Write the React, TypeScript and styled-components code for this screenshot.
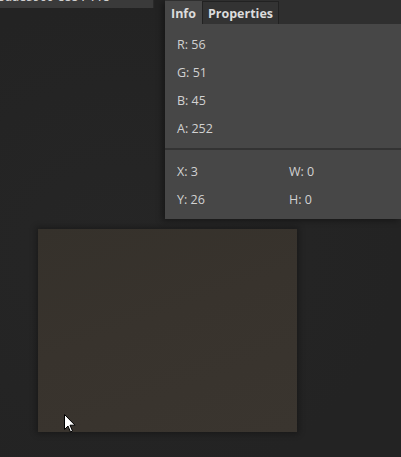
import styled, { createGlobalStyle } from "styled-components";

const colors = {
  workspace: "#232323",
  docTab: "#3a3a3a",
  panel: "#474747",
  panelBar: "#2f2f2f",
  tabIdle: "#333333",
  tabBorder: "#222222",
  divider: "#333333",
  text: "#d2d2d2",
  tabText: "#dcdcdc",
  canvas: "#38332d",
};

const GlobalStyle = createGlobalStyle`
  html, body {
    margin: 0;
    padding: 0;
    background: ${colors.workspace};
  }

  body {
    font-family: "Open Sans", "Noto Sans", sans-serif;
  }
`;

interface Reading {
  label: string;
  value: number;
}

const pixel: Reading[] = [
  { label: "R", value: 56 },
  { label: "G", value: 51 },
  { label: "B", value: 45 },
  { label: "A", value: 252 },
];

const selection: Reading[] = [
  { label: "X", value: 3 },
  { label: "W", value: 0 },
  { label: "Y", value: 26 },
  { label: "H", value: 0 },
];

const Cursor = () => (
  <CursorSvg width="13" height="20" viewBox="0 0 13 20">
    <path
      d="M0.5 0.5 L0.5 15.5 L4 12 L6.5 18 L8.5 17 L6 11.2 L11 11.2 Z"
      fill="#ffffff"
      stroke="#000000"
      strokeWidth="1"
      strokeLinejoin="miter"
    />
  </CursorSvg>
);

const App = () => {
  return (
    <>
      <GlobalStyle />
      <Workspace>
        <TopRow>
          <DocColumn>
            <DocTab>
              <DocTitle>3dae5900-e884-11e</DocTitle>
              <DocClose>× ×</DocClose>
            </DocTab>
          </DocColumn>

          <Panel>
            <TabBar>
              <Tab active>Info</Tab>
              <Tab active={false}>Properties</Tab>
            </TabBar>

            <PanelBody>
              <Section>
                {pixel.map((r) => (
                  <Row key={r.label}>
                    {r.label}: {r.value}
                  </Row>
                ))}
              </Section>
              <Divider />
              <SectionGrid>
                {selection.map((r) => (
                  <Row key={r.label}>
                    {r.label}: {r.value}
                  </Row>
                ))}
              </SectionGrid>
            </PanelBody>
          </Panel>
        </TopRow>

        <Canvas>
          <Cursor />
        </Canvas>
      </Workspace>
    </>
  );
};

const Workspace = styled.div`
  width: 401px;
  height: 457px;
  overflow: hidden;

  background: radial-gradient(
    ellipse at 30% 55%,
    #262626 0%,
    ${colors.workspace} 70%
  );

  display: flex;
  flex-direction: column;
`;

const TopRow = styled.div`
  display: flex;
  align-items: flex-start;
`;

const DocColumn = styled.div`
  width: 165px;
  flex-shrink: 0;
`;

const DocTab = styled.div`
  width: 154px;
  height: 8px;
  overflow: hidden;

  background-color: ${colors.docTab};
  border-right: 1px solid #2a2a2a;

  display: flex;
  align-items: flex-start;
  justify-content: space-between;
  padding-right: 18px;
  box-sizing: border-box;
`;

const DocTitle = styled.span`
  margin-top: -10px;
  margin-left: -2px;

  font-size: 12px;
  line-height: 14px;
  font-weight: 600;
  color: #cfcfcf;
  white-space: nowrap;
`;

const DocClose = styled.span`
  margin-top: -10px;

  font-size: 12px;
  line-height: 14px;
  color: #9a9a9a;
`;

const Panel = styled.div`
  width: 236px;
  flex-shrink: 0;

  display: flex;
  flex-direction: column;

  box-shadow: -3px 2px 6px rgba(0, 0, 0, 0.35);
`;

const TabBar = styled.div`
  height: 24px;
  padding-top: 1px;
  box-sizing: border-box;

  background-color: ${colors.panelBar};

  display: flex;
  align-items: stretch;
`;

const Tab = styled.div<{ active: boolean }>`
  padding: 0 5px;

  display: flex;
  align-items: center;

  font-size: 12.5px;
  font-weight: 700;
  color: ${colors.tabText};

  background-color: ${({ active }) => (active ? colors.panel : colors.tabIdle)};
  border: 1px solid ${({ active }) => (active ? colors.panel : colors.tabBorder)};
  border-bottom: none;
`;

const PanelBody = styled.div`
  background-color: ${colors.panel};
  padding: 6px 0 6px;
`;

const Section = styled.div`
  display: flex;
  flex-direction: column;
  padding-bottom: 6px;
`;

const SectionGrid = styled.div`
  display: grid;
  grid-template-columns: 112px 1fr;
  padding-top: 7px;
`;

const Row = styled.div`
  height: 28px;
  padding-left: 12px;

  display: flex;
  align-items: center;

  font-size: 12.5px;
  color: ${colors.text};
`;

const Divider = styled.div`
  height: 2px;
  background-color: ${colors.divider};
`;

const Canvas = styled.div`
  position: relative;
  width: 259px;
  height: 203px;
  margin: 10px 0 0 38px;

  background: linear-gradient(160deg, #35312b 0%, ${colors.canvas} 45%, #3a352f 100%);
  box-shadow: 0 0 6px 2px rgba(0, 0, 0, 0.3);
`;

const CursorSvg = styled.svg`
  position: absolute;
  left: 26px;
  top: 185px;
`;

export default App;
